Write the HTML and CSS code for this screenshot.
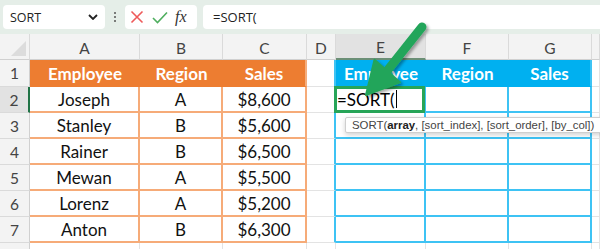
FILE: index.html
```html
<!DOCTYPE html>
<html>
<head>
<meta charset="utf-8">
<link rel="stylesheet" href="styles.css">
</head>
<body>
<div class="app">
  <div class="fbar">
    <div class="namebox"><span>SORT</span>
      <svg class="chev" width="10" height="6" viewBox="0 0 10 6"><path d="M1 1 L5 5 L9 1" fill="none" stroke="#222" stroke-width="1.8"/></svg>
    </div>
    <div class="dots"><span></span><span></span><span></span></div>
    <div class="fxbox">
      <svg width="14" height="14" viewBox="0 0 14 14"><path d="M1.5 1.5 L12.5 12.5 M12.5 1.5 L1.5 12.5" stroke="#ee5a5a" stroke-width="1.6" fill="none"/></svg>
      <svg width="16" height="13" viewBox="0 0 16 13"><path d="M1 7 L5.5 11.5 L15 1.5" stroke="#4fae5f" stroke-width="1.6" fill="none"/></svg>
      <span class="fx">fx</span>
    </div>
    <div class="formula">=SORT(</div>
  </div>

  <div class="sheet">
    <div class="ch corner"></div>
    <div class="ch">A</div><div class="ch">B</div><div class="ch">C</div><div class="ch">D</div>
    <div class="ch sel">E</div><div class="ch">F</div><div class="ch">G</div><div class="ch"></div>

    <div class="rh">1</div>
    <div class="c oh">Employee</div><div class="c oh">Region</div><div class="c oh oh-end">Sales</div>
    <div class="c d"></div>
    <div class="c bh">Employee</div><div class="c bh">Region</div><div class="c bh bh-end">Sales</div><div class="c"></div>

    <div class="rh rsel">2</div>
    <div class="c o">Joseph</div><div class="c o">A</div><div class="c o">$8,600</div>
    <div class="c d"></div>
    <div class="c b active"><span class="entry">=SORT(</span><span class="caret"></span></div><div class="c b"></div><div class="c b"></div><div class="c"></div>

    <div class="rh">3</div>
    <div class="c o">Stanley</div><div class="c o">B</div><div class="c o">$5,600</div>
    <div class="c d"></div>
    <div class="c b"></div><div class="c b"></div><div class="c b"></div><div class="c"></div>

    <div class="rh">4</div>
    <div class="c o">Rainer</div><div class="c o">B</div><div class="c o">$6,500</div>
    <div class="c d"></div>
    <div class="c b"></div><div class="c b"></div><div class="c b"></div><div class="c"></div>

    <div class="rh">5</div>
    <div class="c o">Mewan</div><div class="c o">A</div><div class="c o">$5,500</div>
    <div class="c d"></div>
    <div class="c b"></div><div class="c b"></div><div class="c b"></div><div class="c"></div>

    <div class="rh">6</div>
    <div class="c o">Lorenz</div><div class="c o">A</div><div class="c o">$5,200</div>
    <div class="c d"></div>
    <div class="c b"></div><div class="c b"></div><div class="c b"></div><div class="c"></div>

    <div class="rh">7</div>
    <div class="c o">Anton</div><div class="c o">B</div><div class="c o">$6,300</div>
    <div class="c d"></div>
    <div class="c b"></div><div class="c b"></div><div class="c b"></div><div class="c"></div>

    <div class="rh last"></div>
    <div class="c last"></div><div class="c last"></div><div class="c last"></div><div class="c last"></div>
    <div class="c last"></div><div class="c last"></div><div class="c last"></div><div class="c last"></div>
  </div>

  <div class="tip">SORT(<b>array</b>, [sort_index], [sort_order], [by_col])</div>

  <svg class="arrow" width="120" height="110" viewBox="0 0 120 110">
    <defs>
      <filter id="sh" x="-30%" y="-30%" width="160%" height="160%">
        <feDropShadow dx="2" dy="2" stdDeviation="1.5" flood-color="#000" flood-opacity="0.35"/>
      </filter>
    </defs>
    <g filter="url(#sh)" fill="#22a55a" stroke="#22a55a">
      <line x1="88" y1="7" x2="53" y2="51" stroke-width="9" stroke-linecap="round"/>
      <polygon points="32,75 40.5,39.7 65.9,62.3" stroke-width="2" stroke-linejoin="round"/>
    </g>
  </svg>
</div>
</body>
</html>
```

FILE: styles.css
```css
* { box-sizing: border-box; }
html, body { margin: 0; padding: 0; }
body {
  width: 600px;
  height: 249px;
  overflow: hidden;
  background: #fff;
  font-family: "Lato", "Open Sans", sans-serif;
}
.app { position: relative; width: 600px; height: 249px; overflow: hidden; }

.fbar {
  height: 34px;
  background: #e5eee8;
  display: flex;
  align-items: center;
  padding: 0 0 0 3px;
  font-family: "Open Sans", sans-serif;
  font-size: 12.5px;
  color: #222;
}
.namebox {
  width: 102px;
  height: 24px;
  background: #fff;
  border-radius: 4px;
  display: flex;
  align-items: center;
  justify-content: space-between;
  padding: 0 7px 0 7px;
}
.dots {
  width: 20px;
  display: flex;
  flex-direction: column;
  align-items: center;
  gap: 2px;
}
.dots span { width: 2px; height: 2px; background: #555; border-radius: 1px; }
.fxbox {
  width: 72px;
  height: 24px;
  background: #fff;
  border-radius: 4px;
  display: flex;
  align-items: center;
  gap: 8px;
  padding-left: 5px;
}
.fx {
  font-family: "Liberation Serif", serif;
  font-style: italic;
  font-size: 16px;
  color: #333;
  margin-left: -1px;
}
.formula {
  flex: 1;
  height: 24px;
  margin-left: 6px;
  background: #fff;
  border-radius: 4px 0 0 4px;
  display: flex;
  align-items: center;
  padding-left: 10px;
  font-size: 13px;
}

.sheet {
  display: grid;
  grid-template-columns: 30px 110px 83px 84px 29px 90px 83px 83px 8px;
  grid-template-rows: 26px 27px repeat(6, 26px) 6px;
}
.ch {
  background: #f3f3f3;
  border-right: 1px solid #dadada;
  border-bottom: 1px solid #d0d0d0;
  display: flex;
  align-items: center;
  justify-content: center;
  font-size: 15.5px;
  color: #444;
  padding-top: 2px;
}
.ch.corner { position: relative; }
.ch.corner::after {
  content: "";
  position: absolute;
  right: 3px;
  bottom: 3px;
  border-left: 15px solid transparent;
  border-bottom: 15px solid #dcdcdc;
}
.ch.sel { background: #e2e2e2; border-bottom: 2px solid #6b8f76; }
.rh {
  background: #f3f3f3;
  border-right: 1px solid #d0d0d0;
  border-bottom: 1px solid #dadada;
  display: flex;
  align-items: center;
  justify-content: center;
  font-size: 15.5px;
  color: #444;
}
.rh.rsel { background: #e2e2e2; border-right: 2px solid #217346; }
.c {
  border-right: 1px solid #e3e3e3;
  border-bottom: 1px solid #e3e3e3;
  display: flex;
  align-items: center;
  justify-content: center;
  font-size: 17px;
  color: #111;
}
.last { border-bottom: none; }
.c.oh {
  background: #ed7d31;
  color: #fff;
  font-weight: 700;
  border-right: none;
  border-bottom: 1px solid #ed7d31;
}
.c.oh-end { border-right: 2px solid #f4ad7c; }
.c.o {
  border-right: 2px solid #f6ab78;
  border-bottom: 2px solid #f6ab78;
}
.c.d { border-right: 2px solid #3ec3f4; }
.c.bh {
  background: #00b0f0;
  color: #fff;
  font-weight: 700;
  border-right: none;
  border-bottom: 1px solid #00b0f0;
}
.c.bh-end { border-right: 2px solid #3ec3f4; }
.c.b {
  border-right: 2px solid #3ec3f4;
  border-bottom: 2px solid #3ec3f4;
}
.c.active {
  position: relative;
  justify-content: flex-start;
  padding-left: 0;
}
.c.active::after {
  content: "";
  position: absolute;
  left: -2px;
  top: -1px;
  right: -1px;
  bottom: -2px;
  border: 3px solid #27a558;
}
.entry { font-size: 17px; color: #000; margin-left: 1px; }
.caret { display: inline-block; width: 1px; height: 18px; background: #000; margin-left: 1px; }

.tip {
  position: absolute;
  left: 345px;
  top: 117px;
  width: 258px;
  height: 16px;
  background: #fff;
  border: 1px solid #cfcfcf;
  border-radius: 2px;
  box-shadow: 0 2px 5px rgba(0,0,0,0.18);
  font-family: "Liberation Sans", sans-serif;
  font-size: 11.4px;
  line-height: 14px;
  color: #444;
  padding-left: 6px;
  white-space: nowrap;
}
.tip b { color: #222; }
.arrow {
  position: absolute;
  left: 334px;
  top: 20px;
}
```
